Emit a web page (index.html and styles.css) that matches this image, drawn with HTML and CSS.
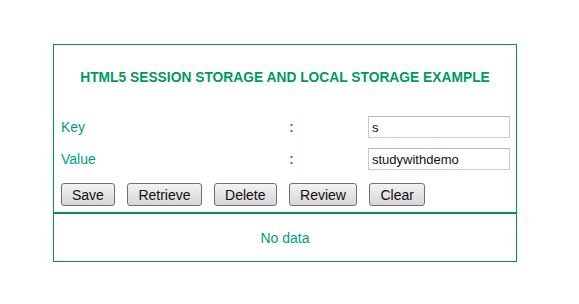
FILE: index.html
```html
<!DOCTYPE html>
<html>
<head>
<meta charset="utf-8">
<link rel="stylesheet" href="styles.css">
</head>
<body>
<div class="wrap">
  <div class="panel">
    <h1 class="title">HTML5 SESSION STORAGE AND LOCAL STORAGE EXAMPLE</h1>
    <div class="form">
      <label class="lbl">Key</label><span class="colon">:</span><input class="field" type="text" value="s">
      <label class="lbl">Value</label><span class="colon">:</span><input class="field" type="text" value="studywithdemo">
    </div>
    <div class="buttons">
      <button class="btn">Save</button>
      <button class="btn">Retrieve</button>
      <button class="btn">Delete</button>
      <button class="btn">Review</button>
      <button class="btn">Clear</button>
    </div>
  </div>
  <div class="result">No data</div>
</div>
</body>
</html>
```
FILE: styles.css
```css
html, body {
  margin: 0;
  padding: 0;
  background: #ffffff;
  font-family: "Liberation Sans", Arial, sans-serif;
}
.wrap {
  margin: 44px 0 0 53px;
  width: 464px;
}
.panel {
  border: 1px solid #00954f;
  padding: 0 0 6px 7px;
}
.title {
  margin: 0 0 0 -7px;
  padding: 25px 0 0 0;
  height: 42px;
  box-sizing: border-box;
  text-align: center;
  font-size: 13.8px;
  font-weight: bold;
  color: #009a5e;
  letter-spacing: 0;
}
.form {
  display: grid;
  grid-template-columns: 228px 79px 142px;
  grid-auto-rows: 22px;
  row-gap: 10px;
  margin-top: 29px;
  align-items: center;
}
.lbl {
  font-size: 14px;
  color: #00a07a;
}
.colon {
  font-size: 14px;
  font-weight: bold;
  color: #00a07a;
}
.field {
  box-sizing: border-box;
  width: 142px;
  height: 22px;
  border: 1px solid #c9c9c9;
  border-top-color: #b8b8b8;
  padding: 1px 3px 0;
  font-family: "Liberation Sans", Arial, sans-serif;
  font-size: 13px;
  color: #111;
  outline: none;
}
.buttons {
  display: flex;
  gap: 12.5px;
  margin-top: 13px;
}
.btn {
  box-sizing: border-box;
  height: 23px;
  padding: 0 10px;
  border: 1px solid #707070;
  border-radius: 3px;
  background: linear-gradient(#f3f3f3, #e4e4e4 50%, #d6d6d6);
  font-family: "Liberation Sans", Arial, sans-serif;
  font-size: 14px;
  color: #111;
}
.result {
  border: 1px solid #00954f;
  border-top-width: 1px;
  height: 49px;
  box-sizing: border-box;
  display: flex;
  align-items: center;
  justify-content: center;
  font-size: 14px;
  color: #00a07a;
}
```
